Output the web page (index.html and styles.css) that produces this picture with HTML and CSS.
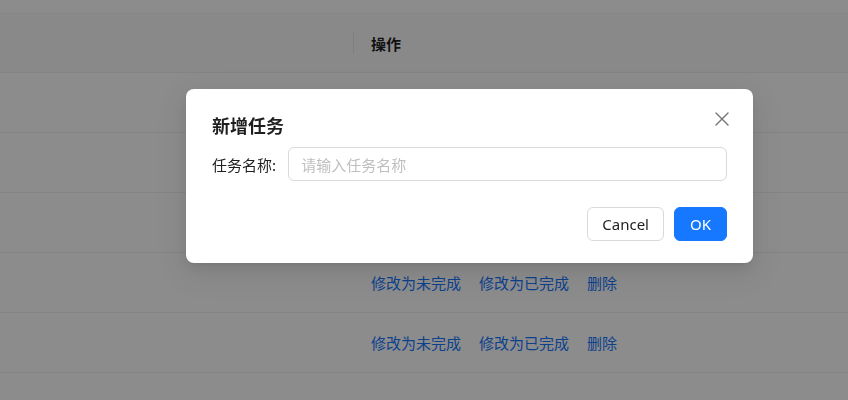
FILE: index.html
```html
<!DOCTYPE html>
<html lang="zh-CN">
<head>
<meta charset="utf-8">
<title>任务列表</title>
<link rel="stylesheet" href="styles.css">
</head>
<body>
<div class="page">
  <div class="table">
    <div class="row head">
      <div class="cell"></div>
      <div class="cell action-head">操作</div>
    </div>
    <div class="row">
      <div class="cell"></div>
      <div class="cell actions"><a>修改为未完成</a><a>修改为已完成</a><a>删除</a></div>
    </div>
    <div class="row">
      <div class="cell"></div>
      <div class="cell actions"><a>修改为未完成</a><a>修改为已完成</a><a>删除</a></div>
    </div>
    <div class="row">
      <div class="cell"></div>
      <div class="cell actions"><a>修改为未完成</a><a>修改为已完成</a><a>删除</a></div>
    </div>
    <div class="row">
      <div class="cell"></div>
      <div class="cell actions"><a>修改为未完成</a><a>修改为已完成</a><a>删除</a></div>
    </div>
    <div class="row">
      <div class="cell"></div>
      <div class="cell actions"><a>修改为未完成</a><a>修改为已完成</a><a>删除</a></div>
    </div>
  </div>
</div>
<div class="mask"></div>
<div class="modal">
  <button class="close" aria-label="close">
    <svg width="14" height="14" viewBox="0 0 14 14"><path d="M1 1 L13 13 M13 1 L1 13" stroke="#737373" stroke-width="1.4" fill="none" stroke-linecap="round"/></svg>
  </button>
  <div class="title">新增任务</div>
  <div class="form-row">
    <label class="label">任务名称:</label>
    <input class="input" type="text" placeholder="请输入任务名称">
  </div>
  <div class="footer">
    <button class="btn">Cancel</button>
    <button class="btn primary">OK</button>
  </div>
</div>
</body>
</html>
```

FILE: styles.css
```css
* { box-sizing: border-box; }
html, body { margin: 0; padding: 0; }
body {
  width: 848px;
  height: 400px;
  overflow: hidden;
  background: #ffffff;
  font-family: "Noto Sans", "Noto Sans CJK SC", sans-serif;
  font-size: 15px;
  color: rgba(0,0,0,0.88);
}
.page { padding-top: 13px; }
.table { display: flex; flex-direction: column; }
.row {
  display: grid;
  grid-template-columns: 353px 1fr;
  height: 60px;
  border-bottom: 1px solid #f0f0f0;
}
.row.head { background: #fafafa; border-top: 1px solid #f5f5f5; }
.cell { display: flex; align-items: center; padding: 0 18px; }
.action-head {
  position: relative;
  font-weight: 700;
  font-family: "Noto Sans CJK SC", sans-serif;
}
.action-head::before {
  content: "";
  position: absolute;
  left: 0;
  top: 50%;
  width: 1px;
  height: 22px;
  transform: translateY(-50%);
  background: #e8e8e8;
}
.actions { gap: 18px; font-family: "Noto Sans CJK SC", sans-serif; }
.actions a { color: #1677ff; cursor: pointer; }
.mask {
  position: fixed;
  inset: 0;
  background: rgba(0,0,0,0.45);
}
.modal {
  position: absolute;
  left: 186px;
  top: 89px;
  width: 567px;
  padding: 22px 26px 22px 26px;
  background: #fff;
  border-radius: 8px;
  box-shadow: 0 6px 16px 0 rgba(0,0,0,0.08), 0 3px 6px -4px rgba(0,0,0,0.12), 0 9px 28px 8px rgba(0,0,0,0.05);
}
.close {
  position: absolute;
  top: 19px;
  right: 20px;
  width: 22px;
  height: 22px;
  padding: 0;
  border: 0;
  background: transparent;
  display: flex;
  align-items: center;
  justify-content: center;
}
.title {
  font-family: "Noto Sans CJK SC", sans-serif;
  font-size: 18px;
  font-weight: 700;
  line-height: 28px;
  color: rgba(0,0,0,0.88);
}
.form-row {
  display: flex;
  align-items: center;
  margin-top: 8px;
  gap: 12px;
}
.label {
  font-family: "Noto Sans CJK SC", sans-serif;
  font-size: 15px;
  color: rgba(0,0,0,0.88);
  white-space: nowrap;
}
.input {
  flex: 1;
  height: 34px;
  border: 1px solid #d9d9d9;
  border-radius: 6px;
  padding: 0 12px;
  font-family: "Noto Sans CJK SC", sans-serif;
  font-size: 15px;
  outline: none;
}
.input::placeholder { color: #bfbfbf; }
.footer {
  display: flex;
  justify-content: flex-end;
  gap: 10px;
  margin-top: 26px;
}
.btn {
  height: 34px;
  padding: 0 14px;
  border-radius: 6px;
  border: 1px solid #d9d9d9;
  background: #fff;
  color: rgba(0,0,0,0.88);
  font-family: "Noto Sans", "Open Sans", sans-serif;
  font-size: 15px;
}
.btn.primary {
  background: #1677ff;
  border-color: #1677ff;
  color: #fff;
  padding: 0 15px;
}
```
